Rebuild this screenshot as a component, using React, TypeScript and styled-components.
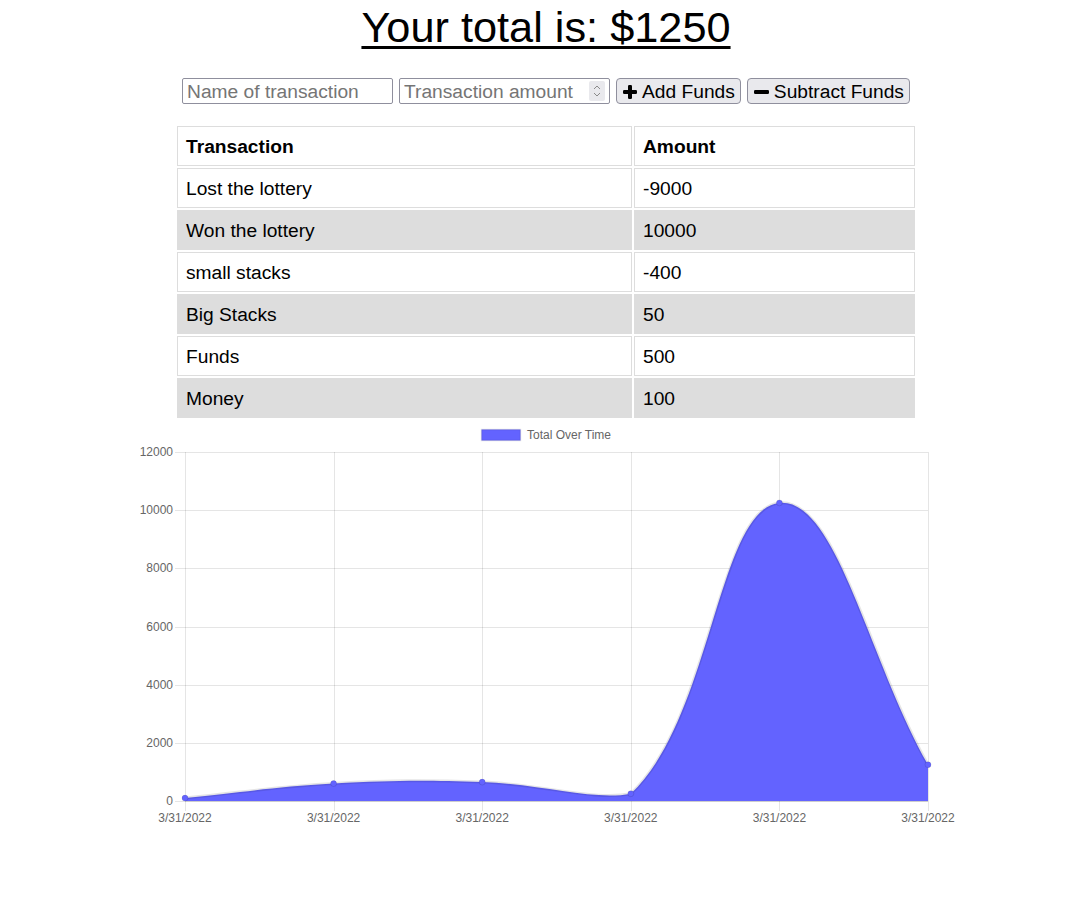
import React from "react";
import styled, { createGlobalStyle } from "styled-components";

const Global = createGlobalStyle`
  html, body { margin: 0; padding: 0; background: #fff; }
  body { font-family: "Liberation Sans", Arial, sans-serif; color: #000; }
`;

const Page = styled.div`
  padding-left: 10px;
  display: flex;
  flex-direction: column;
  align-items: center;
`;

const Title = styled.h1`
  margin: 0;
  padding-top: 3px;
  font-size: 43.3px;
  font-weight: 400;
  line-height: 49px;
  text-decoration: underline;
  text-decoration-thickness: 3px;
  text-underline-offset: 4px;
`;

const Form = styled.div`
  margin-top: 26px;
  display: flex;
  gap: 6px;
  align-items: center;
`;

const TextInput = styled.input`
  box-sizing: border-box;
  width: 211px;
  height: 26px;
  border: 1px solid #8f8f9d;
  border-radius: 2px;
  padding: 2px 4px 0 4px;
  font-family: "Liberation Sans", Arial, sans-serif;
  font-size: 19.2px;
  outline: none;
  &::placeholder { color: #757575; }
`;

const NumberBox = styled.div`
  box-sizing: border-box;
  width: 211px;
  height: 26px;
  border: 1px solid #8f8f9d;
  border-radius: 2px;
  display: flex;
  align-items: center;
  padding: 0 4px 0 0;
`;

const BareInput = styled.input`
  flex: 1;
  min-width: 0;
  border: none;
  outline: none;
  padding: 2px 4px 0 4px;
  font-family: "Liberation Sans", Arial, sans-serif;
  font-size: 19.2px;
  background: transparent;
  &::placeholder { color: #757575; }
`;

const Spinner = styled.div`
  width: 16px;
  height: 20px;
  background: #e9e9ed;
  border-radius: 2px;
  display: flex;
  align-items: center;
  justify-content: center;
`;

const Button = styled.button`
  box-sizing: border-box;
  height: 26px;
  padding: 1px 5px 0 6px;
  border: 1px solid #8f8f9d;
  border-radius: 4px;
  background: #e9e9ed;
  color: #000;
  font-family: "Liberation Sans", Arial, sans-serif;
  font-size: 19.2px;
  display: flex;
  align-items: center;
  gap: 5px;
  cursor: pointer;
`;

const Table = styled.table`
  margin-top: 20px;
  border-collapse: separate;
  border-spacing: 2px;
  font-size: 19.2px;
`;

const Th = styled.th<{ $w: number }>`
  box-sizing: border-box;
  width: ${(p) => p.$w}px;
  height: 40px;
  border: 1px solid #dddddd;
  padding: 9px 8px 7px 8px;
  text-align: left;
  font-weight: 700;
`;

const Row = styled.tr<{ $shade: boolean }>`
  background: ${(p) => (p.$shade ? "#dddddd" : "#ffffff")};
`;

const Td = styled.td`
  box-sizing: border-box;
  height: 40px;
  border: 1px solid #dddddd;
  padding: 9px 8px 7px 8px;
  text-align: left;
`;

const ChartSvg = styled.svg`
  display: block;
  margin-left: -10px;
  font-family: "Liberation Sans", Arial, sans-serif;
`;

const rows: [string, string][] = [
  ["Lost the lottery", "-9000"],
  ["Won the lottery", "10000"],
  ["small stacks", "-400"],
  ["Big Stacks", "50"],
  ["Funds", "500"],
  ["Money", "100"],
];

const values = [100, 600, 650, 250, 10250, 1250];
const LEFT = 185;
const RIGHT = 928;
const TOP = 32;
const BOTTOM = 381;
const STEP = (RIGHT - LEFT) / 5;
const yOf = (v: number) => BOTTOM - (v * (BOTTOM - TOP)) / 12000;

type Pt = { x: number; y: number };

function buildPath(pts: Pt[]) {
  const t = 0.4;
  const ctrl = pts.map((cur, i) => {
    const prev = pts[i - 1] || cur;
    const next = pts[i + 1] || cur;
    const d01 = Math.hypot(cur.x - prev.x, cur.y - prev.y);
    const d12 = Math.hypot(next.x - cur.x, next.y - cur.y);
    let s01 = d01 / (d01 + d12);
    let s12 = d12 / (d01 + d12);
    if (isNaN(s01)) s01 = 0;
    if (isNaN(s12)) s12 = 0;
    const fa = t * s01;
    const fb = t * s12;
    const cap = (p: Pt) => ({
      x: Math.min(Math.max(p.x, LEFT), RIGHT),
      y: Math.min(Math.max(p.y, TOP), BOTTOM),
    });
    return {
      prev: cap({ x: cur.x - fa * (next.x - prev.x), y: cur.y - fa * (next.y - prev.y) }),
      next: cap({ x: cur.x + fb * (next.x - prev.x), y: cur.y + fb * (next.y - prev.y) }),
    };
  });
  let d = `M${pts[0].x},${pts[0].y}`;
  for (let i = 1; i < pts.length; i++) {
    const c1 = ctrl[i - 1].next;
    const c2 = ctrl[i].prev;
    d += ` C${c1.x},${c1.y} ${c2.x},${c2.y} ${pts[i].x},${pts[i].y}`;
  }
  return d;
}

function Chart() {
  const pts = values.map((v, i) => ({ x: LEFT + i * STEP, y: yOf(v) }));
  const line = buildPath(pts);
  const area = `${line} L${RIGHT},${BOTTOM} L${LEFT},${BOTTOM} Z`;
  const grid = "rgba(0,0,0,0.1)";
  const fill = "#6363ff";
  const yTicks = [0, 2000, 4000, 6000, 8000, 10000, 12000];
  return (
    <ChartSvg width={1082} height={440} viewBox="0 0 1082 440">
      <rect x={481.5} y={9.5} width={39} height={11} fill={fill} stroke={grid} strokeWidth={1.5} />
      <text x={527} y={19} fontSize={12} fill="#666">Total Over Time</text>
      {yTicks.map((v) => (
        <g key={v}>
          <line x1={175} x2={RIGHT} y1={Math.round(yOf(v)) + 0.5} y2={Math.round(yOf(v)) + 0.5} stroke={grid} strokeWidth={1} />
          <text x={173} y={yOf(v) + 4} fontSize={12} fill="#666" textAnchor="end">{v}</text>
        </g>
      ))}
      {pts.map((p, i) => (
        <g key={i}>
          <line x1={Math.round(p.x) + 0.5} x2={Math.round(p.x) + 0.5} y1={TOP} y2={BOTTOM + 10} stroke={grid} strokeWidth={1} />
          <text x={p.x} y={BOTTOM + 21} fontSize={12} fill="#666" textAnchor="middle">3/31/2022</text>
        </g>
      ))}
      <path d={area} fill={fill} />
      <path d={line} fill="none" stroke={grid} strokeWidth={3} />
      <line x1={LEFT} x2={RIGHT} y1={BOTTOM + 0.5} y2={BOTTOM + 0.5} stroke={grid} strokeWidth={1} />
      {pts.map((p, i) => (
        <circle key={i} cx={p.x} cy={p.y} r={3} fill={fill} stroke={grid} strokeWidth={1} />
      ))}
    </ChartSvg>
  );
}

const Chevrons = () => (
  <svg width="8" height="14" viewBox="0 0 8 14">
    <path d="M1 5 L4 2 L7 5" fill="none" stroke="#8a8a8a" strokeWidth="1" />
    <path d="M1 9 L4 12 L7 9" fill="none" stroke="#8a8a8a" strokeWidth="1" />
  </svg>
);

const PlusIcon = () => (
  <svg width="14" height="14" viewBox="0 0 14 14">
    <rect x="5" y="0" width="4" height="14" rx="1.2" fill="#000" />
    <rect x="0" y="5" width="14" height="4" rx="1.2" fill="#000" />
  </svg>
);

const MinusIcon = () => (
  <svg width="15" height="14" viewBox="0 0 15 14">
    <rect x="0" y="5" width="15" height="4" rx="1.2" fill="#000" />
  </svg>
);

export default function App() {
  return (
    <>
      <Global />
      <Page>
        <Title>Your total is: $1250</Title>
        <Form>
          <TextInput placeholder="Name of transaction" />
          <NumberBox>
            <BareInput placeholder="Transaction amount" />
            <Spinner>
              <Chevrons />
            </Spinner>
          </NumberBox>
          <Button>
            <PlusIcon />
            Add Funds
          </Button>
          <Button>
            <MinusIcon />
            Subtract Funds
          </Button>
        </Form>
        <Table>
          <thead>
            <tr>
              <Th $w={455}>Transaction</Th>
              <Th $w={281}>Amount</Th>
            </tr>
          </thead>
          <tbody>
            {rows.map(([name, amt], i) => (
              <Row key={name} $shade={i % 2 === 1}>
                <Td>{name}</Td>
                <Td>{amt}</Td>
              </Row>
            ))}
          </tbody>
        </Table>
        <Chart />
      </Page>
    </>
  );
}
